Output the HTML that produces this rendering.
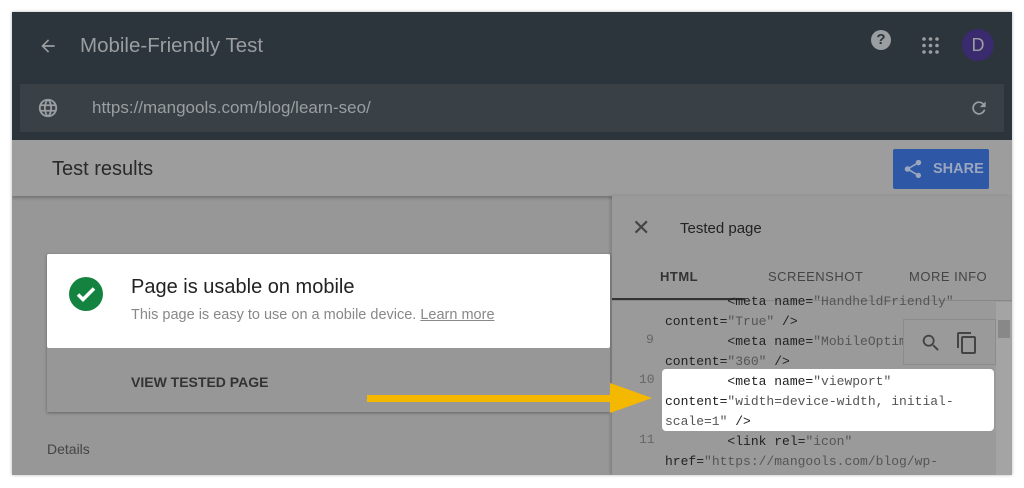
<!DOCTYPE html>
<html><head><meta charset="utf-8"><style>
*{margin:0;padding:0;box-sizing:border-box}
body{width:1024px;height:488px;background:#fff;position:relative;overflow:hidden;font-family:"Liberation Sans",Arial,sans-serif}
.a{position:absolute}
.mono{font-family:"Liberation Mono","DejaVu Sans Mono",monospace;font-size:13px;color:#222}
.s{color:#555}
</style></head><body>
<div class="a" style="left:12px;top:12px;width:1000px;height:463px;background:#979797;overflow:hidden;box-shadow:0 0 3px rgba(0,0,0,.3)">
 <div class="a" style="left:0;top:0;width:1000px;height:128px;background:#2c353b"></div>
 <svg class="a" style="left:26px;top:24px" width="20" height="20" viewBox="0 0 24 24"><path d="M20 11H7.8l5.6-5.6L12 4l-8 8 8 8 1.4-1.4L7.8 13H20z" fill="#9a9ea1"/></svg>
 <div class="a" style="left:68px;top:22px;font-size:20.5px;color:#9a9ea1">Mobile-Friendly Test</div>
 <div class="a" style="left:859px;top:18px;width:20px;height:20px;border-radius:50%;background:#9a9ea1;color:#2c353b;font-weight:bold;font-size:15px;text-align:center;line-height:20px">?</div>
 <svg class="a" style="left:910px;top:25px" width="17" height="17" viewBox="0 0 17 17" fill="#9a9ea1"><circle cx="2" cy="2" r="1.8"/><circle cx="8.5" cy="2" r="1.8"/><circle cx="15" cy="2" r="1.8"/><circle cx="2" cy="8.5" r="1.8"/><circle cx="8.5" cy="8.5" r="1.8"/><circle cx="15" cy="8.5" r="1.8"/><circle cx="2" cy="15" r="1.8"/><circle cx="8.5" cy="15" r="1.8"/><circle cx="15" cy="15" r="1.8"/></svg>
 <div class="a" style="left:950px;top:17px;width:32px;height:32px;border-radius:50%;background:#3a2a6e;color:#9a9ea1;font-size:18px;text-align:center;line-height:32px">D</div>
 <div class="a" style="left:8px;top:72px;width:984px;height:48px;background:#394147"></div>
 <svg class="a" style="left:25px;top:85px" width="22" height="22" viewBox="0 0 24 24"><path fill="#9a9ea1" d="M12 2a10 10 0 100 20 10 10 0 000-20zm6.9 6h-2.9a15.7 15.7 0 00-1.4-3.6A8 8 0 0118.9 8zM12 4c.8 1.2 1.5 2.5 1.9 4h-3.8c.4-1.4 1.1-2.8 1.9-4zM4.3 14a8 8 0 010-4h3.4a16 16 0 000 4H4.3zm.8 2h3c.3 1.3.8 2.5 1.4 3.6A8 8 0 015.1 16zm3-8h-3a8 8 0 014.3-3.6C8.8 5.5 8.4 6.7 8.1 8zM12 20c-.8-1.2-1.5-2.5-1.9-4h3.8c-.4 1.4-1.1 2.8-1.9 4zm2.3-6H9.7a14.7 14.7 0 010-4h4.6a14.7 14.7 0 010 4zm.3 5.6c.6-1.1 1.1-2.3 1.4-3.6h3a8 8 0 01-4.4 3.6zm1.7-5.6a16 16 0 000-4h3.4a8 8 0 010 4h-3.4z"/></svg>
 <div class="a" style="left:80px;top:86px;font-size:17px;color:#9a9ea1">https://mangools.com/blog/learn-seo/</div>
 <svg class="a" style="left:957px;top:86px" width="20" height="20" viewBox="0 0 24 24"><path fill="#9a9ea1" d="M17.6 6.4A8 8 0 1019.7 14h-2.1A6 6 0 1112 6c1.7 0 3.1.7 4.2 1.8L13 11h7V4l-2.4 2.4z"/></svg>
 <div class="a" style="left:0;top:128px;width:1000px;height:56px;background:#9d9d9d;box-shadow:0 2px 3px rgba(0,0,0,.25)"></div>
 <div class="a" style="left:40px;top:146px;font-size:20px;color:#2a2a2a">Test results</div>
 <div class="a" style="left:881px;top:137px;width:96px;height:40px;background:#2e57a5;border-radius:2px"></div>
 <svg class="a" style="left:890px;top:146px" width="22" height="22" viewBox="0 0 24 24"><path fill="#9aa6c0" d="M18 16.1c-.8 0-1.5.3-2 .8l-7.1-4.2c.1-.2.1-.5.1-.7s0-.5-.1-.7L16 7.2c.5.5 1.2.8 2 .8a3 3 0 10-3-3c0 .2 0 .5.1.7L8 9.8A3 3 0 106 15c.8 0 1.5-.3 2-.8l7.1 4.2c-.1.2-.1.4-.1.6a2.9 2.9 0 102.9-2.9z"/></svg>
 <div class="a" style="left:921px;top:149px;font-size:14.5px;font-weight:bold;color:#9aa6c0">SHARE</div>
 <div class="a" style="left:600px;top:184px;width:400px;height:279px;background:#9a9a9a;box-shadow:-2px 0 3px rgba(0,0,0,.15)"></div>
 <div class="a" style="left:620px;top:205px;font-size:22px;color:#444;line-height:22px">✕</div>
 <div class="a" style="left:668px;top:208px;font-size:15px;color:#222">Tested page</div>
 <div class="a" style="left:648px;top:257px;font-size:13px;font-weight:bold;color:#333;letter-spacing:.5px">HTML</div>
 <div class="a" style="left:756px;top:257px;font-size:13px;color:#444;letter-spacing:.5px">SCREENSHOT</div>
 <div class="a" style="left:897px;top:257px;font-size:13px;color:#444;letter-spacing:.5px">MORE INFO</div>
 <div class="a" style="left:600px;top:286px;width:133px;height:2px;background:#333"></div>
 <div class="a" style="left:600px;top:288px;width:400px;height:1px;background:#888"></div>
 <div class="a" style="left:984px;top:290px;width:16px;height:173px;background:#a4a4a4"></div>
 <div class="a" style="left:986px;top:308px;width:12px;height:18px;background:#888"></div>
 <div class="a mono s" style="left:634px;top:320px;color:#666">9</div>
 <div class="a mono s" style="left:627px;top:360px;color:#666">10</div>
 <div class="a mono s" style="left:627px;top:420px;color:#666">11</div>
 <div class="a" style="left:650px;top:357px;width:332px;height:62px;background:#fff;border-radius:4px"></div>
 <div class="a mono" style="left:653px;top:280px;line-height:20px;white-space:pre">        &lt;meta name=<span class="s">"HandheldFriendly"</span>
content=<span class="s">"True"</span> /&gt;
        &lt;meta name=<span class="s">"MobileOptimized"</span>
content=<span class="s">"360"</span> /&gt;
        &lt;meta name=<span class="s">"viewport"</span>
content=<span class="s">"width=device-width, initial-</span>
<span class="s">scale=1"</span> /&gt;
        &lt;link rel=<span class="s">"icon"</span>
href=<span class="s">"https://mangools.com/blog/wp-</span></div>
 <div class="a" style="left:891px;top:307px;width:93px;height:46px;background:#9a9a9a;border:1px solid #8c8c8c"></div>
 <svg class="a" style="left:908px;top:320px" width="22" height="22" viewBox="0 0 24 24"><path fill="#444" d="M15.5 14h-.8l-.3-.3A6.5 6.5 0 109.5 16c1.6 0 3.1-.6 4.2-1.6l.3.3v.8l5 5 1.5-1.5-5-5zm-6 0a4.5 4.5 0 110-9 4.5 4.5 0 010 9z"/></svg>
 <svg class="a" style="left:943px;top:319px" width="24" height="24" viewBox="0 0 24 24"><path fill="#444" d="M16 1H4a2 2 0 00-2 2v14h2V3h12V1zm3 4H8a2 2 0 00-2 2v14a2 2 0 002 2h11a2 2 0 002-2V7a2 2 0 00-2-2zm0 16H8V7h11v14z"/></svg>
 <div class="a" style="left:35px;top:242px;width:563px;height:158px;background:#979797;box-shadow:0 1px 3px rgba(0,0,0,.35)"></div>
 <div class="a" style="left:35px;top:242px;width:563px;height:94px;background:#fff;border-radius:2px"></div>
 <div class="a" style="left:57px;top:265px;width:34px;height:34px;border-radius:50%;background:#14833f"></div>
 <svg class="a" style="left:57px;top:265px" width="34" height="34" viewBox="0 0 34 34"><path d="M9 17.5l5 5 11-11" stroke="#fff" stroke-width="3.5" fill="none"/></svg>
 <div class="a" style="left:119px;top:264px;font-size:20px;color:#222">Page is usable on mobile</div>
 <div class="a" style="left:119px;top:295px;font-size:14.5px;color:#888">This page is easy to use on a mobile device. <span style="text-decoration:underline">Learn more</span></div>
 <div class="a" style="left:119px;top:362px;font-size:14px;font-weight:bold;color:#333">VIEW TESTED PAGE</div>
 <div class="a" style="left:35px;top:429px;font-size:14px;color:#444">Details</div>
 <div class="a" style="left:355px;top:383px;width:248px;height:7px;background:#f5b800"></div>
 <svg class="a" style="left:598px;top:371px" width="42" height="30" viewBox="0 0 42 30"><path d="M0 0L42 15 0 30z" fill="#f5b800"/></svg>
</div>
</body></html>
